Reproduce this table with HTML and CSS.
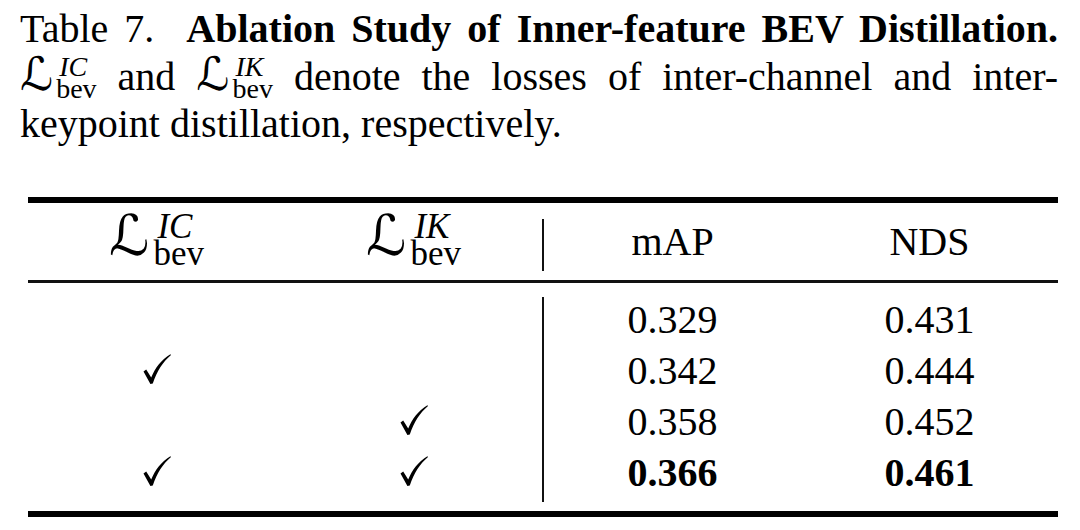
FILE: index.html
```html
<!DOCTYPE html>
<html>
<head>
<meta charset="utf-8">
<link rel="stylesheet" href="styles.css">
</head>
<body>
<div class="page">
  <p class="caption">
    <span class="line jl">Table 7.&nbsp; <b>Ablation Study of Inner-feature BEV Distillation.</b></span>
    <span class="line jl"><span class="m"><span class="cal">ℒ</span><span class="ss"><span class="sup">IC</span><span class="sub">bev</span></span></span> and <span class="m"><span class="cal">ℒ</span><span class="ss"><span class="sup">IK</span><span class="sub">bev</span></span></span> denote the losses of inter-channel and inter-</span>
    <span class="line">keypoint distillation, respectively.</span>
  </p>

  <div class="tbl">
    <div class="grid head">
      <div class="cell"><span class="m big"><span class="cal">ℒ</span><span class="ss"><span class="sup">IC</span><span class="sub">bev</span></span></span></div>
      <div class="cell"><span class="m big"><span class="cal">ℒ</span><span class="ss"><span class="sup">IK</span><span class="sub">bev</span></span></span></div>
      <div class="vr vr-head"></div>
      <div class="cell">mAP</div>
      <div class="cell">NDS</div>
    </div>
    <div class="grid body">
      <div class="vr vr-body"></div>

      <div class="cell c1"></div>
      <div class="cell c2"></div>
      <div class="cell c3">0.329</div>
      <div class="cell c4">0.431</div>

      <div class="cell c1"><svg class="chk" viewBox="0 0 28 30"><path d="M0.5 17.5 L3.2 15.6 L8.2 23.6 C12 14 18 6 27.4 0.2 L28 1.1 C20 8 14 17 9.8 29.6 L7.4 29.9 Z"/></svg></div>
      <div class="cell c2"></div>
      <div class="cell c3">0.342</div>
      <div class="cell c4">0.444</div>

      <div class="cell c1"></div>
      <div class="cell c2"><svg class="chk" viewBox="0 0 28 30"><path d="M0.5 17.5 L3.2 15.6 L8.2 23.6 C12 14 18 6 27.4 0.2 L28 1.1 C20 8 14 17 9.8 29.6 L7.4 29.9 Z"/></svg></div>
      <div class="cell c3">0.358</div>
      <div class="cell c4">0.452</div>

      <div class="cell c1"><svg class="chk" viewBox="0 0 28 30"><path d="M0.5 17.5 L3.2 15.6 L8.2 23.6 C12 14 18 6 27.4 0.2 L28 1.1 C20 8 14 17 9.8 29.6 L7.4 29.9 Z"/></svg></div>
      <div class="cell c2"><svg class="chk" viewBox="0 0 28 30"><path d="M0.5 17.5 L3.2 15.6 L8.2 23.6 C12 14 18 6 27.4 0.2 L28 1.1 C20 8 14 17 9.8 29.6 L7.4 29.9 Z"/></svg></div>
      <div class="cell c3 bold">0.366</div>
      <div class="cell c4 bold">0.461</div>
    </div>
  </div>
</div>
</body>
</html>
```

FILE: styles.css
```css
html, body {
  margin: 0;
  padding: 0;
  background: #fff;
}
body {
  width: 1080px;
  height: 530px;
  overflow: hidden;
  color: #000;
  font-family: "Liberation Serif", "Times New Roman", serif;
  font-size: 40px;
}
.page {
  padding: 5px 22px 0 20px;
}
.caption {
  margin: 0;
  line-height: 47.5px;
  font-family: "Liberation Serif", "Times New Roman", serif;
}
.line {
  display: block;
}
.jl {
  text-align: justify;
  text-align-last: justify;
}
.caption b {
  font-weight: bold;
}

/* math */
.m {
  white-space: nowrap;
}
.cal {
  font-family: "DejaVu Serif", "DejaVu Sans", serif;
  font-style: italic;
  font-size: 46px;
  line-height: 40px;
}
.ss {
  display: inline-block;
  vertical-align: -8px;
  margin-left: 3px;
  font-size: 28px;
  text-align: left;
}
.sup {
  display: block;
  line-height: 22px;
  font-style: italic;
  padding-left: 3px;
}
.sub {
  display: block;
  line-height: 22px;
}
.big .cal {
  font-size: 56px;
  line-height: 50px;
}
.big .ss {
  font-size: 35px;
  vertical-align: -10px;
  margin-left: 4px;
}
.big .sup {
  line-height: 27px;
  padding-left: 4px;
}
.big .sub {
  line-height: 27px;
}

/* table */
.tbl {
  margin: 49px 0 0 8px;
  border-top: 6px solid #000;
  border-bottom: 6px solid #000;
}
.grid {
  display: grid;
  grid-template-columns: 1fr 1fr 2px 1fr 1fr;
}
.cell {
  text-align: center;
}
.head {
  height: 77px;
  line-height: 77px;
  border-bottom: 3px solid #111;
}
.vr {
  background: #111;
}
.vr-head {
  margin: 16px 0 9px;
}
.body {
  padding: 11px 0 13px;
  grid-template-rows: repeat(4, 51px);
  line-height: 51px;
}
.vr-body {
  grid-column: 3;
  grid-row: 1 / 5;
  margin: 3px 0 -4px;
}
.c1 { grid-column: 1; }
.c2 { grid-column: 2; }
.c3 { grid-column: 4; }
.c4 { grid-column: 5; }
.bold {
  font-weight: bold;
}
.chk {
  width: 28px;
  height: 30px;
  vertical-align: baseline;
  fill: #000;
}
```
